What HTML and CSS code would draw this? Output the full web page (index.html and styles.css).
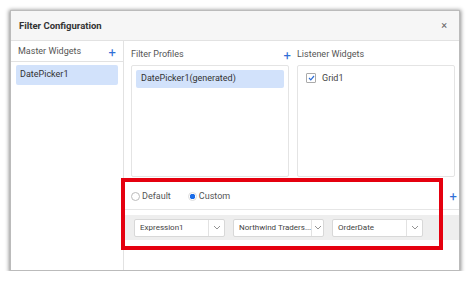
FILE: index.html
```html
<!DOCTYPE html>
<html lang="en">
<head>
  <meta charset="UTF-8" />
  <title>Filter Configuration</title>
  <link rel="stylesheet" href="styles.css">
</head>
<body>
  <div class="dialog">
    <div class="header">
      <span class="title">Filter Configuration</span>
      <span class="close">&times;</span>
    </div>
    <div class="content">
      <div class="master">
        <div class="master-head">
          <span>Master Widgets</span>
          <span class="plus">+</span>
        </div>
        <div class="item">DatePicker1</div>
      </div>
      <div class="main">
        <div class="panels">
          <div class="panel profiles">
            <div class="panel-head">
              <span>Filter Profiles</span>
              <span class="plus">+</span>
            </div>
            <div class="box">
              <div class="item">DatePicker1(generated)</div>
            </div>
          </div>
          <div class="panel listeners">
            <div class="panel-head">
              <span>Listener Widgets</span>
            </div>
            <div class="box">
              <label class="check-row">
                <span class="check">
                  <svg width="7" height="6" viewBox="0 0 7 6"><path d="M1 3 L2.8 4.8 L6 1" fill="none" stroke="#2f6fd6" stroke-width="1.2"/></svg>
                </span>
                Grid1
              </label>
            </div>
          </div>
        </div>
        <div class="mode-row">
          <label class="radio"><span class="dot"></span>Default</label>
          <label class="radio on"><span class="dot"></span>Custom</label>
          <span class="plus">+</span>
        </div>
        <div class="expr-row">
          <div class="select"><span class="val">Expression1</span><span class="arrow"><svg width="8" height="5" viewBox="0 0 8 5"><path d="M1 1 L4 4 L7 1" fill="none" stroke="#888" stroke-width="0.9"/></svg></span></div>
          <div class="select"><span class="val">Northwind Traders...</span><span class="arrow"><svg width="8" height="5" viewBox="0 0 8 5"><path d="M1 1 L4 4 L7 1" fill="none" stroke="#888" stroke-width="0.9"/></svg></span></div>
          <div class="select"><span class="val">OrderDate</span><span class="arrow"><svg width="8" height="5" viewBox="0 0 8 5"><path d="M1 1 L4 4 L7 1" fill="none" stroke="#888" stroke-width="0.9"/></svg></span></div>
        </div>
      </div>
    </div>
    <div class="highlight"></div>
  </div>
</body>
</html>
```

FILE: styles.css
```css
body {
  margin: 0;
  background-color: #fff;
  font-family: Roboto, "Liberation Sans", sans-serif;
  font-size: 9px;
  color: #444;
}

.dialog {
  position: relative;
  margin: 10px 0 0 10px;
  width: 450px;
  height: 261px;
  background-color: #fff;
  border: 1px solid #bbb;
  box-sizing: border-box;
  box-shadow: 0 1px 4px 1px rgba(0, 0, 0, 0.45);
  display: flex;
  flex-direction: column;
}

.header {
  height: 30px;
  flex: none;
  background-color: #f6f6f6;
  border-bottom: 1px solid #e2e2e2;
  box-sizing: border-box;
  display: flex;
  align-items: center;
  justify-content: space-between;
  padding: 0 12px 0 8px;
}

.title {
  font-weight: bold;
  font-size: 9.5px;
  color: #333;
}

.close {
  font-size: 11px;
  color: #666;
}

.content {
  flex: 1;
  display: flex;
}

.master {
  width: 112px;
  flex: none;
  border-right: 1px solid #e2e2e2;
}

.master-head {
  height: 20px;
  border-bottom: 1px solid #e2e2e2;
  display: flex;
  align-items: center;
  justify-content: space-between;
  padding: 0 7px 0 7px;
  color: #555;
}

.plus {
  color: #2f6fd6;
  font-size: 13px;
  line-height: 1;
}

.master-head .plus {
  margin-top: 3px;
}

.item {
  background-color: #d2e2fb;
  border-radius: 2px;
  height: 20px;
  line-height: 19px;
  padding: 0 4px;
  color: #333;
}

.master .item {
  margin: 3px 5px;
}

.main {
  flex: 1;
  display: flex;
  flex-direction: column;
}

.panels {
  display: flex;
  gap: 8px;
  padding: 0 4px 0 7px;
}

.panel-head {
  height: 24px;
  display: flex;
  align-items: center;
  justify-content: space-between;
  color: #555;
  padding-top: 1px;
  box-sizing: border-box;
}

.profiles {
  width: 158px;
}

.profiles .panel-head {
  padding-right: 1px;
}

.profiles .panel-head .plus {
  margin-top: 4px;
  margin-right: -3px;
}

.listeners {
  flex: 1;
}

.box {
  height: 112px;
  border: 1px solid #e4e4e4;
  border-radius: 2px;
  box-sizing: border-box;
  padding: 4px;
}

.profiles .item {
  height: 18px;
  line-height: 17px;
  padding: 0 5px;
}

.check-row {
  display: flex;
  align-items: center;
  gap: 6px;
  padding: 3px 0 0 4px;
  color: #444;
}

.check {
  width: 8px;
  height: 8px;
  border: 1px solid #aaa;
  border-radius: 1px;
  display: flex;
  align-items: center;
  justify-content: center;
}

.mode-row {
  margin-top: 10px;
  height: 18px;
  display: flex;
  align-items: center;
  padding-left: 7px;
  border-bottom: 1px solid #e6e6e6;
  padding-bottom: 4px;
}

.radio {
  display: flex;
  align-items: center;
  gap: 2px;
  margin-right: 17px;
  color: #555;
}

.dot {
  width: 9px;
  height: 9px;
  border: 1px solid #bbb;
  border-radius: 50%;
  box-sizing: border-box;
  background-color: #fff;
}

.radio.on .dot {
  border: 1px solid #ddd;
  background: radial-gradient(circle, #1a6ce8 0 2.5px, #fff 3px);
}

.mode-row .plus {
  margin-left: auto;
  margin-right: 2px;
}

.expr-row {
  margin-top: 5px;
  height: 25px;
  background-color: #eeeeee;
  display: flex;
  align-items: center;
  gap: 8px;
  padding-left: 10px;
}

.select {
  width: 91px;
  height: 18px;
  background-color: #fff;
  border: 1px solid #d8d8d8;
  border-radius: 2px;
  box-sizing: border-box;
  display: flex;
  align-items: center;
  color: #444;
  font-size: 8px;
}

.val {
  flex: 1;
  padding-left: 5px;
  white-space: nowrap;
}

.arrow {
  width: 15px;
  height: 100%;
  border-left: 1px solid #e2e2e2;
  display: flex;
  align-items: center;
  justify-content: center;
}

.highlight {
  position: absolute;
  left: 110px;
  top: 167px;
  width: 322px;
  height: 72px;
  border: 4px solid #e5000f;
  box-sizing: border-box;
}
```
